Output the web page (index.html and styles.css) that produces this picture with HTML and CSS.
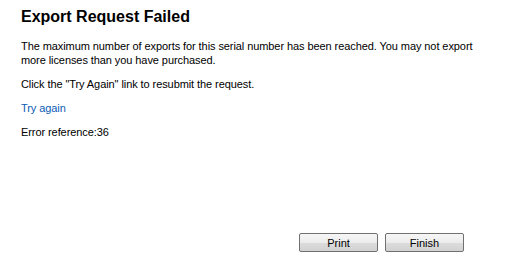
FILE: index.html
```html
<!DOCTYPE html>
<html>
<head>
<meta charset="utf-8">
<link rel="stylesheet" href="styles.css">
</head>
<body>
<div class="page">
  <div class="content">
    <h1 class="title">Export Request Failed</h1>
    <p class="msg">The maximum number of exports for this serial number has been reached. You may not export more licenses than you have purchased.</p>
    <p class="msg">Click the "Try Again" link to resubmit the request.</p>
    <p class="msg"><a class="link" href="#">Try again</a></p>
    <p class="msg">Error reference:36</p>
  </div>
  <div class="actions">
    <button class="btn">Print</button>
    <button class="btn">Finish</button>
  </div>
</div>
</body>
</html>
```
FILE: styles.css
```css
html, body {
  margin: 0;
  padding: 0;
  background: #ffffff;
}
.page {
  width: 523px;
  height: 260px;
  display: flex;
  flex-direction: column;
  font-family: "Liberation Sans", Arial, sans-serif;
  color: #000;
}
.content {
  flex: 1;
  padding: 6px 30px 0 21px;
}
.title {
  font-size: 16px;
  font-weight: bold;
  margin: 0 0 11px 0;
  line-height: 22px;
}
.msg {
  font-size: 11px;
  line-height: 14px;
  letter-spacing: -0.08px;
  margin: 0 0 10px 0;
}
.link {
  color: #0a5bb5;
  text-decoration: none;
}
.actions {
  display: flex;
  gap: 7px;
  padding: 0 0 8px 299px;
}
.btn {
  width: 79px;
  height: 19px;
  padding: 0;
  font-family: "Liberation Sans", Arial, sans-serif;
  font-size: 11px;
  color: #000;
  border: 1px solid #707070;
  border-radius: 2px;
  background: linear-gradient(#f6f6f6 0%, #ececec 50%, #dcdcdc 51%, #d2d2d2 100%);
}
```
